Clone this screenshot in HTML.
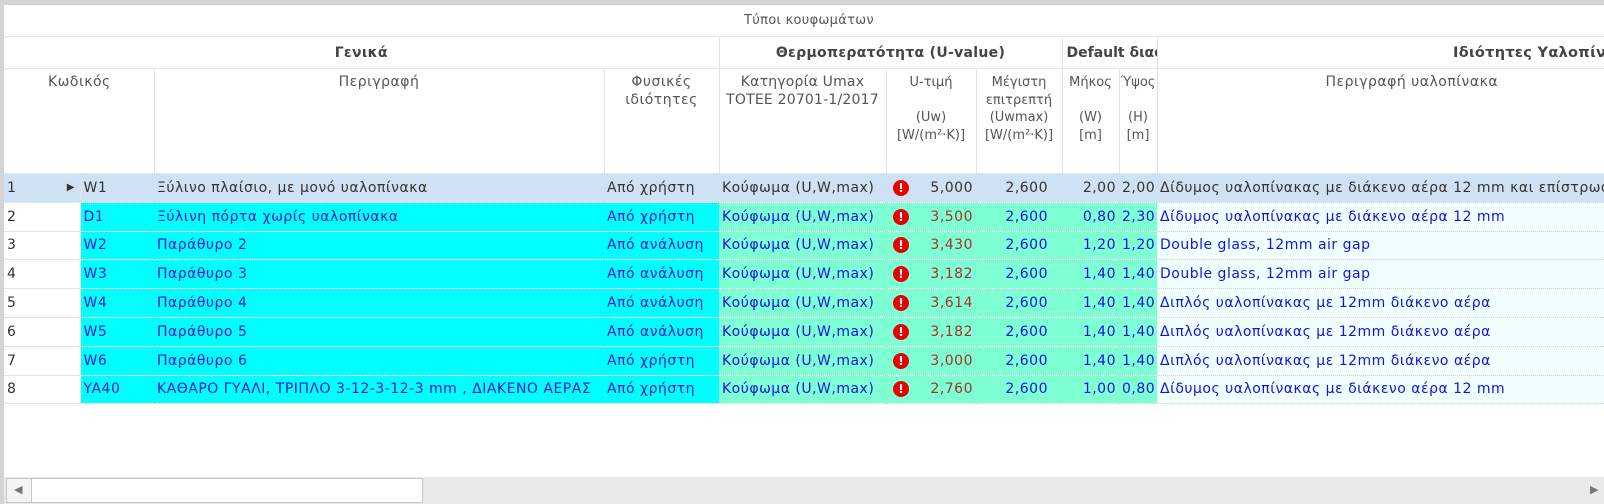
<!DOCTYPE html>
<html><head><meta charset="utf-8"><style>
body{margin:0;width:1604px;height:504px;overflow:hidden;background:#fff;font-family:"DejaVu Sans","Liberation Sans",sans-serif;font-size:14px;letter-spacing:0.5px;color:#333;position:relative}
.topb{position:absolute;left:0;top:0;width:1604px;height:5px;background:#d4d4d4}
.leftb{position:absolute;left:0;top:0;width:4px;height:504px;background:#d4d4d4}
table{position:absolute;left:4px;top:5px;border-collapse:collapse;table-layout:fixed;width:1700px}
td{padding:0 4px;white-space:nowrap;overflow:hidden;font-weight:normal}
.h td{border-right:1px solid #e3e3e3;border-bottom:1px solid #e3e3e3;color:#555;text-align:center;vertical-align:top}
.g td{font-weight:bold;vertical-align:middle;color:#444;letter-spacing:0.3px}
.n td.sm{letter-spacing:0;font-size:13px;padding:5px 0 0;line-height:17.5px}
.r td{height:27.8px;border-bottom:1px dotted #d0d0d0;color:#1414e0;padding:0 3px}
.r td.rh{background:#fff;color:#333;border-right:1px solid #e3e3e3;border-bottom:1px solid #e3e3e3;letter-spacing:0}
.c{background:#00ffff}.a{background:#7fffd4}.z{background:#f0ffff}
.s td{background:#cfe2f3!important;color:#333!important}
.num{text-align:right}
.r td.red{color:#a8322a}
.u{display:flex;justify-content:space-between;align-items:center}
.ic{display:inline-block;width:16px;height:16px;border-radius:50%;background:#e80000;color:#fff;font-weight:bold;font-size:12px;line-height:16px;text-align:center;margin-left:4px;letter-spacing:0}
.sb{position:absolute;left:4px;top:477px;width:1600px;height:27px;background:#e9e9e9}
.btn{position:absolute;left:6px;top:478px;width:24px;height:23px;background:#f4f4f4;border:1px solid #c8c8c8}
.th{position:absolute;left:31px;top:478px;width:390px;height:23px;background:#fff;border:1px solid #c8c8c8}
.ar{position:absolute;top:483px;font-size:11px;color:#777}
.idx{position:absolute;left:1453px;top:45px;font-weight:bold;color:#444;font-size:14.5px;letter-spacing:0.3px;white-space:nowrap}
</style></head><body>
<div class="topb"></div><div class="leftb"></div>
<table>
<colgroup><col style="width:76px"><col style="width:74px"><col style="width:450px"><col style="width:115px"><col style="width:167px"><col style="width:90px"><col style="width:86px"><col style="width:57px"><col style="width:38px"><col style="width:547px"></colgroup>
<tr class="h"><td colspan="10" style="height:31px;vertical-align:middle;padding-left:740px;text-align:left;font-size:13px;letter-spacing:0.3px">Τύποι κουφωμάτων</td></tr>
<tr class="h g"><td colspan="4" style="height:31px">Γενικά</td><td colspan="3">Θερμοπερατότητα (U-value)</td><td colspan="2" style="text-align:left;padding-left:4px;letter-spacing:0">Default διασ</td><td></td></tr>
<tr class="h n" style="height:105px"><td colspan="2" style="padding-top:5px;text-align:left;padding-left:44px">Κωδικός</td><td style="padding-top:5px">Περιγραφή</td><td style="padding-top:5px;line-height:17.5px">Φυσικές<br>ιδιότητες</td><td style="padding-top:5px;line-height:17.5px;letter-spacing:0.2px">Κατηγορία Umax<br>ΤΟΤΕΕ 20701-1/2017</td><td class="sm">U-τιμή<br><br>(Uw)<br>[W/(m²·K)]</td><td class="sm">Μέγιστη<br>επιτρεπτή<br>(Uwmax)<br>[W/(m²·K)]</td><td class="sm">Μήκος<br><br>(W)<br>[m]</td><td class="sm">Ύψος<br><br>(H)<br>[m]</td><td style="padding-top:5px;text-align:left;padding-left:168px">Περιγραφή υαλοπίνακα</td></tr>
<tr class="r s"><td class="rh">1<span style="float:right;font-size:10px;margin:2px 2px 0 0">▶</span></td><td>W1</td><td>Ξύλινο πλαίσιο, με μονό υαλοπίνακα</td><td>Από χρήστη</td><td>Κούφωμα (U,W,max)</td><td><div class="u"><span class="ic">!</span><span>5,000</span></div></td><td class="num" style="padding-right:14px">2,600</td><td class="num">2,00</td><td class="num">2,00</td><td>Δίδυμος υαλοπίνακας με διάκενο αέρα 12 mm και επίστρωση</td></tr>
<tr class="r"><td class="rh">2</td><td class="c">D1</td><td class="c">Ξύλινη πόρτα χωρίς υαλοπίνακα</td><td class="c">Από χρήστη</td><td class="a">Κούφωμα (U,W,max)</td><td class="a red"><div class="u"><span class="ic">!</span><span>3,500</span></div></td><td class="a num" style="padding-right:14px">2,600</td><td class="a num">0,80</td><td class="a num">2,30</td><td class="z">Δίδυμος υαλοπίνακας με διάκενο αέρα 12 mm</td></tr>
<tr class="r"><td class="rh">3</td><td class="c">W2</td><td class="c">Παράθυρο 2</td><td class="c">Από ανάλυση</td><td class="a">Κούφωμα (U,W,max)</td><td class="a red"><div class="u"><span class="ic">!</span><span>3,430</span></div></td><td class="a num" style="padding-right:14px">2,600</td><td class="a num">1,20</td><td class="a num">1,20</td><td class="z">Double glass, 12mm air gap</td></tr>
<tr class="r"><td class="rh">4</td><td class="c">W3</td><td class="c">Παράθυρο 3</td><td class="c">Από ανάλυση</td><td class="a">Κούφωμα (U,W,max)</td><td class="a red"><div class="u"><span class="ic">!</span><span>3,182</span></div></td><td class="a num" style="padding-right:14px">2,600</td><td class="a num">1,40</td><td class="a num">1,40</td><td class="z">Double glass, 12mm air gap</td></tr>
<tr class="r"><td class="rh">5</td><td class="c">W4</td><td class="c">Παράθυρο 4</td><td class="c">Από ανάλυση</td><td class="a">Κούφωμα (U,W,max)</td><td class="a red"><div class="u"><span class="ic">!</span><span>3,614</span></div></td><td class="a num" style="padding-right:14px">2,600</td><td class="a num">1,40</td><td class="a num">1,40</td><td class="z">Διπλός υαλοπίνακας με 12mm διάκενο αέρα</td></tr>
<tr class="r"><td class="rh">6</td><td class="c">W5</td><td class="c">Παράθυρο 5</td><td class="c">Από ανάλυση</td><td class="a">Κούφωμα (U,W,max)</td><td class="a red"><div class="u"><span class="ic">!</span><span>3,182</span></div></td><td class="a num" style="padding-right:14px">2,600</td><td class="a num">1,40</td><td class="a num">1,40</td><td class="z">Διπλός υαλοπίνακας με 12mm διάκενο αέρα</td></tr>
<tr class="r"><td class="rh">7</td><td class="c">W6</td><td class="c">Παράθυρο 6</td><td class="c">Από χρήστη</td><td class="a">Κούφωμα (U,W,max)</td><td class="a red"><div class="u"><span class="ic">!</span><span>3,000</span></div></td><td class="a num" style="padding-right:14px">2,600</td><td class="a num">1,40</td><td class="a num">1,40</td><td class="z">Διπλός υαλοπίνακας με 12mm διάκενο αέρα</td></tr>
<tr class="r"><td class="rh">8</td><td class="c">YA40</td><td class="c">ΚΑΘΑΡΟ ΓΥΑΛΙ, ΤΡΙΠΛΟ 3-12-3-12-3 mm , ΔΙΑΚΕΝΟ ΑΕΡΑΣ</td><td class="c">Από χρήστη</td><td class="a">Κούφωμα (U,W,max)</td><td class="a red"><div class="u"><span class="ic">!</span><span>2,760</span></div></td><td class="a num" style="padding-right:14px">2,600</td><td class="a num">1,00</td><td class="a num">0,80</td><td class="z">Δίδυμος υαλοπίνακας με διάκενο αέρα 12 mm</td></tr>
</table>
<div class="idx">Ιδιότητες Υαλοπίνακα</div>
<div class="sb"></div><div class="btn"></div><div class="th"></div>
<div class="ar" style="left:14px">◀</div><div class="ar" style="left:1590px">▶</div>
</body></html>
